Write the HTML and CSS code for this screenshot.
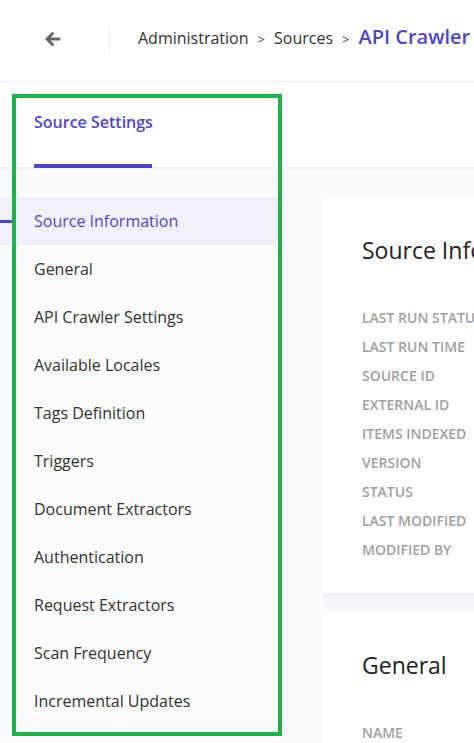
FILE: index.html
```html
<!DOCTYPE html>
<html lang="en">
<head>
<meta charset="utf-8">
<title>Source Settings</title>
<link rel="stylesheet" href="styles.css">
</head>
<body>
<header class="topbar">
  <div class="back">
    <svg class="back-icon" viewBox="0 0 16 16" width="17" height="16" aria-hidden="true">
      <path d="M8 2.5 L2.5 8 L8 13.5 M2.5 8 H14.5" fill="none" stroke="#666" stroke-width="3" stroke-linecap="round" stroke-linejoin="round"/>
    </svg>
  </div>
  <div class="divider"></div>
  <nav class="crumbs">
    <span class="crumb">Administration</span>
    <span class="sep">&gt;</span>
    <span class="crumb">Sources</span>
    <span class="sep">&gt;</span>
    <span class="crumb current">API Crawler</span>
  </nav>
</header>
<div class="tabbar">
  <div class="tab active">Source Settings</div>
</div>
<div class="layout">
  <aside class="sidebar">
    <div class="item active">Source Information</div>
    <div class="item">General</div>
    <div class="item">API Crawler Settings</div>
    <div class="item">Available Locales</div>
    <div class="item">Tags Definition</div>
    <div class="item">Triggers</div>
    <div class="item">Document Extractors</div>
    <div class="item">Authentication</div>
    <div class="item">Request Extractors</div>
    <div class="item">Scan Frequency</div>
    <div class="item">Incremental Updates</div>
  </aside>
  <main class="main">
    <section class="card">
      <h2 class="card-title">Source Information</h2>
      <dl class="fields">
        <dt>Last Run Status</dt>
        <dt>Last Run Time</dt>
        <dt>Source ID</dt>
        <dt>External ID</dt>
        <dt>Items Indexed</dt>
        <dt>Version</dt>
        <dt>Status</dt>
        <dt>Last Modified</dt>
        <dt>Modified By</dt>
      </dl>
    </section>
    <div class="card-gap"></div>
    <section class="card">
      <h2 class="card-title">General</h2>
      <dl class="fields">
        <dt>Name</dt>
      </dl>
    </section>
  </main>
</div>
<div class="highlight"></div>
</body>
</html>
```
FILE: styles.css
```css
html, body {
  margin: 0;
  padding: 0;
  overflow: hidden;
  height: 743px;
}
body {
  font-family: "Open Sans", "Noto Sans", sans-serif;
  background: #fafafa;
  color: #333;
  position: relative;
  width: 474px;
}
.topbar {
  height: 81px;
  background: #fff;
  border-bottom: 1px solid #ececec;
  display: flex;
  align-items: center;
  white-space: nowrap;
}
.back {
  width: 109px;
  display: flex;
  justify-content: center;
  padding-right: 4px;
  box-sizing: border-box;
  margin-top: -4px;
}
.back-icon { display: block; }
.divider {
  width: 1px;
  height: 28px;
  background: #ececec;
  margin-top: -4px;
}
.crumbs {
  display: flex;
  align-items: baseline;
  gap: 9px;
  padding-left: 28px;
  margin-top: -8px;
}
.crumb {
  font-size: 16px;
  color: #333;
}
.sep {
  font-size: 13px;
  color: #444;
}
.crumb.current {
  font-size: 20px;
  font-weight: 600;
  color: #4f46c8;
}
.tabbar {
  height: 86px;
  background: #fff;
  box-shadow: 0 1px 2px rgba(0,0,0,0.06);
  border-bottom: 1px solid #eeeeee;
  box-sizing: border-box;
  padding-left: 34px;
  display: flex;
  position: relative;
}
.tab {
  font-size: 16px;
  font-weight: 600;
  color: #4f46c8;
  padding-top: 29px;
  height: 86px;
  box-sizing: border-box;
  border-bottom: 4px solid #4f46c8;
  margin-bottom: -1px;
  width: 118px;
  white-space: nowrap;
}
.layout {
  display: flex;
  padding-top: 29px;
}
.sidebar {
  width: 280px;
  flex: none;
  background: #fcfcfd;
  min-height: 560px;
}
.item {
  height: 48px;
  line-height: 48px;
  padding-left: 34px;
  font-size: 16px;
  color: #333;
  white-space: nowrap;
  position: relative;
}
.item.active {
  background: #f1f1fb;
  color: #4f46c8;
  font-weight: 500;
}
.item.active::before {
  content: "";
  position: absolute;
  left: 0;
  top: 23px;
  width: 12px;
  height: 3px;
  background: #4f46c8;
}
.main {
  flex: none;
  padding-left: 43px;
}
.card {
  width: 400px;
  background: #fff;
  padding: 37px 0 29px 39px;
  box-sizing: border-box;
}
.card-title {
  margin: 0;
  font-size: 23px;
  font-weight: 400;
  color: #222;
  line-height: 32px;
  white-space: nowrap;
}
.fields {
  margin: 37px 0 0;
}
.fields dt {
  font-size: 14px;
  font-weight: 600;
  text-transform: uppercase;
  color: #a0a0a0;
  line-height: 29px;
  white-space: nowrap;
}
.card-gap {
  height: 19px;
  background: linear-gradient(#f1f1fd, #fafafa);
}
.highlight {
  position: absolute;
  left: 12px;
  top: 94px;
  width: 270px;
  height: 642px;
  border: 4px solid #21b04b;
  box-sizing: border-box;
  pointer-events: none;
}
```
